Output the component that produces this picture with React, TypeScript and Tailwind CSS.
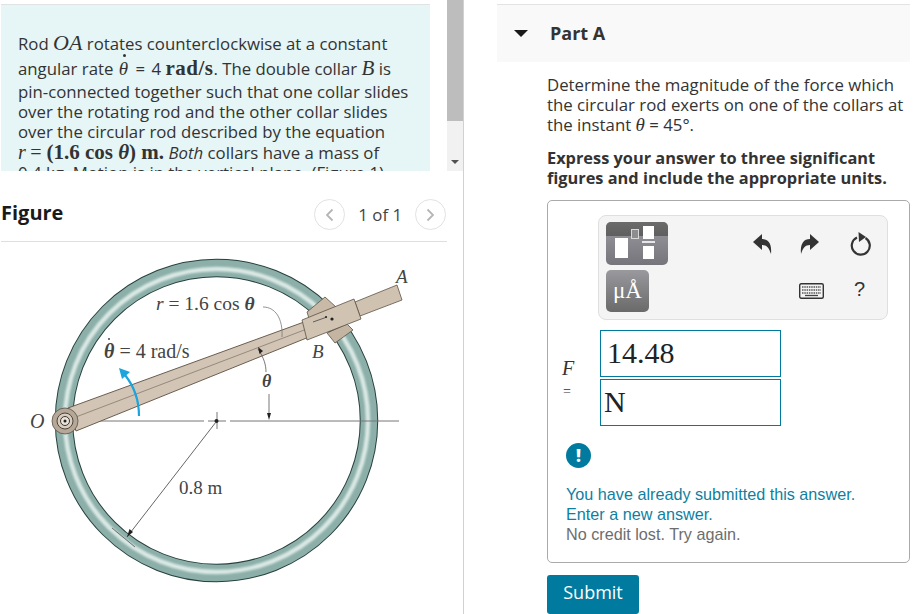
const serif = "font-['Liberation_Serif',serif]"

const ThetaDot = () => (
  <span className="relative mx-[1px] inline-block font-['Liberation_Serif',serif] text-[19px] leading-none">
    <i>θ</i>
    <span className="absolute left-[4px] top-[-5px] h-[3px] w-[3px] rounded-full bg-[#333]" />
  </span>
)

function RodFigure() {
  return (
    <svg width="447" height="372" viewBox="0 242 447 372" className="block">
      <defs>
        <filter id="soft" x="-10%" y="-10%" width="120%" height="120%">
          <feGaussianBlur stdDeviation="1.2" />
        </filter>
        <filter id="slight" x="-5%" y="-5%" width="110%" height="110%">
          <feGaussianBlur stdDeviation="0.35" />
        </filter>
      </defs>
      <g filter="url(#slight)">
        {/* ring */}
        <circle cx="216.5" cy="420.5" r="152.5" fill="none" stroke="#26403b" strokeWidth="18.5" />
        <circle cx="216.5" cy="420.5" r="152.5" fill="none" stroke="#8cafa9" strokeWidth="16.5" />
        <circle cx="216.5" cy="420.5" r="151.5" fill="none" stroke="#dbe9e5" strokeWidth="4.5" filter="url(#soft)" />

        {/* axis lines */}
        <path d="M72 421H204M230 421H399M217 412V429M208 421H226" stroke="#777" strokeWidth="1" fill="none" />
        <circle cx="216.5" cy="421" r="2" fill="#222" />
        <path d="M216 422L127 537" stroke="#666" strokeWidth="1" fill="none" />
        <path d="M127 537l2.5-8 3.5 3z" fill="#222" />
        <path d="M112 528L135 547" stroke="#555" strokeWidth="0.8" fill="none" />

        {/* collar B wedges */}
        <path d="M307 312L325 297L336 307L340 316L312 328z" fill="#c9baa8" stroke="#5b5146" strokeWidth="0.8" />
        <path d="M327 333L347 324L353 330L335 343z" fill="#c4b5a3" stroke="#5b5146" strokeWidth="0.8" />

        {/* rod */}
        <path d="M355 302L397 285L402 300L360 316z" fill="#cfc2b1" stroke="#5e5346" strokeWidth="0.8" />
        <path d="M68 408L304 322L309 337L76 431z" fill="#d2c5b6" stroke="#6b5d4e" strokeWidth="1" />
        <path d="M68 420L320 324" stroke="#7d7062" strokeWidth="0.7" fill="none" />

        {/* sliding collar */}
        <path d="M302 320L354 299L361 319L307 340z" fill="#d0c3b2" stroke="#5b5146" strokeWidth="0.8" />
        <path d="M313 322L327 317" stroke="#444" strokeWidth="0.8" fill="none" />
        <circle cx="326" cy="321" r="1" fill="#222" transform="translate(0 -4)" />
        <circle cx="332" cy="319" r="1.6" fill="#222" />

        {/* pin O */}
        <circle cx="65" cy="421" r="13" fill="#b5a898" stroke="#5b5146" strokeWidth="0.8" />
        <circle cx="65" cy="421" r="8" fill="#d8cdbf" stroke="#4c443a" strokeWidth="1" />
        <circle cx="65" cy="421" r="4.5" fill="#e9e3da" stroke="#3c352d" strokeWidth="1" />
        <circle cx="65" cy="421" r="1.5" fill="#222" />

        {/* leader for r and theta */}
        <path d="M263 307C275 307 283 318 282 337" stroke="#777" strokeWidth="0.8" fill="none" />
        <path d="M258 349C264 358 266 365 266 372" stroke="#555" strokeWidth="0.8" fill="none" />
        <path d="M269 394L269 417" stroke="#555" strokeWidth="0.8" fill="none" />
        <path d="M269 420l-2-7h4z" fill="#222" />
        <path d="M258 347l1.5 7 3.5-3z" fill="#222" />

        {/* blue rotation arrow */}
        <path d="M139 416C139 397 133 385 125 375" stroke="#1ca4dc" strokeWidth="2.2" fill="none" />
        <path d="M119 368L130 372L122 379z" fill="#1ca4dc" />
      </g>

      <g className="font-['Liberation_Serif',serif]" fill="#444">
        <text x="156" y="310" fontSize="19.5"><tspan fontStyle="italic">r</tspan> = 1.6 cos <tspan fontStyle="italic" fontWeight="700">θ</tspan></text>
        <text x="104" y="358" fontSize="20"><tspan fontStyle="italic" fontWeight="700">θ</tspan> = 4 rad/s</text>
        <circle cx="109" cy="339" r="1" />
        <text x="262" y="387" fontSize="18" fontStyle="italic" fontWeight="700">θ</text>
        <text x="179" y="494" fontSize="19">0.8 m</text>
        <text x="30" y="428" fontSize="20" fontStyle="italic">O</text>
        <text x="312" y="358" fontSize="19" fontStyle="italic">B</text>
        <text x="396" y="283" fontSize="19" fontStyle="italic">A</text>
      </g>
    </svg>
  )
}

function Toolbar() {
  return (
    <div className="ml-[50px] flex h-[105px] w-[290px] rounded-lg border border-[#dfdfdf] bg-[#f4f4f4] pl-[7px] pt-[6px]">
      <div className="flex w-[100px] flex-col gap-[5px]">
        <div className="relative h-[43px] w-[62px] overflow-hidden rounded-[5px] bg-gradient-to-b from-[#9c9aa1] to-[#76757b]">
          <div className="h-[14px] bg-gradient-to-b from-[#6b6b6b] to-[#5f5f5f]" />
          <span className="absolute left-[9px] top-[16px] h-[20px] w-[13px] bg-white" />
          <span className="absolute left-[25px] top-[7px] h-[10px] w-[8px] border border-[#d8d8d8] bg-[#8d8d90]" />
          <span className="absolute left-[37px] top-[4px] h-[13px] w-[11px] bg-white" />
          <span className="absolute left-[36px] top-[19px] h-[2px] w-[13px] bg-[#e6e6e6]" />
          <span className="absolute left-[37px] top-[24px] h-[13px] w-[11px] bg-white" />
        </div>
        <div className="flex h-[42px] w-[43px] items-end justify-center rounded-[5px] bg-gradient-to-b from-[#9a999e] to-[#6a6a6a] pb-[10px] font-['Liberation_Serif',serif] text-[23px] leading-[22px] text-white">
          μÅ
        </div>
      </div>
      <div className="ml-[47px] flex flex-col">
        <div className="flex h-[44px] items-center gap-[28px]">
          <svg width="19" height="21" viewBox="0 0 19 21">
            <path d="M0 8L9 0V5C15 5 19 9 18 20C16 14 14 11 9 11V16z" fill="#333" />
          </svg>
          <svg width="19" height="21" viewBox="0 0 19 21">
            <path d="M19 8L10 0V5C4 5 0 9 1 20C3 14 5 11 10 11V16z" fill="#333" />
          </svg>
          <svg width="22" height="24" viewBox="0 0 22 24" className="ml-[3px]">
            <path d="M7 5.5A9 9 0 1 0 15.5 6" fill="none" stroke="#333" strokeWidth="2.2" />
            <path d="M8.500 0L16 5L9 10z" fill="#333" />
          </svg>
        </div>
        <div className="flex h-[50px] items-center pl-[46px]">
          <svg width="25" height="16" viewBox="0 0 25 16">
            <rect x="0.700" y="0.700" width="23.600" height="14.600" rx="1.500" fill="#f4f4f4" stroke="#333" strokeWidth="1.400" />
            <path d="M3 4H22M3 7H22M3 10H22" stroke="#555" strokeWidth="1.600" strokeDasharray="1.500 0.800" />
            <path d="M6 12.500H19" stroke="#444" strokeWidth="1.300" />
          </svg>
          <span className="mb-[4px] ml-[30px] font-['Liberation_Sans',sans-serif] text-[20px] leading-none text-[#333]">?</span>
        </div>
      </div>
    </div>
  )
}

export default function App() {
  return (
    <div className="flex h-[614px] w-[918px] overflow-hidden bg-white font-['Open_Sans',sans-serif] text-[#333]">
      {/* left: problem statement and figure */}
      <div className="h-full w-[464px] shrink-0 border-r border-[#c6d3e0]">
        <div className="flex h-[171px]">
          <div className="w-[447px] pl-px pr-[17px] pt-[4px]">
            <div className="h-[167px] overflow-hidden border-t border-[#dfe3e3] bg-[#e6f5f6] pl-[17px] pr-[18px] pt-[27px] text-[16.8px] leading-[20px]">
              <p className="h-[20px]">
                Rod <i className={serif + ' text-[22px] leading-none'}>OA</i> rotates counterclockwise at a constant
              </p>
              <p className="mt-[6px] h-[20px]">
                angular rate <ThetaDot /> <span className="mx-[2px]">=</span> 4{' '}
                <span className={serif + ' text-[21px] font-bold leading-none tracking-[0.5px]'}>rad/s</span>. The double collar{' '}
                <i className={serif + ' text-[21px] leading-none'}>B</i> is
              </p>
              <p className="mt-[4px]">
                pin-connected together such that one collar slides over the rotating rod and the other collar slides over the circular
                rod described by the equation
              </p>
              <p className="h-[20px]">
                <i className={serif + ' text-[20px] leading-none'}>r</i> <span className={serif + ' text-[20px] leading-none'}>= </span>
                <span className={serif + ' text-[21px] font-bold leading-none'}>(1.6 cos <i>θ</i>) m.</span> <i>Both</i> collars have a mass of
              </p>
              <p className="mt-[1px]">0.4 kg. Motion is in the vertical plane. (Figure 1)</p>
            </div>
          </div>
          <div className="flex h-[171px] w-[16px] flex-col bg-[#f1f1f1]">
            <div className="h-[121px] bg-[#bdbdbd]" />
            <div className="mx-auto mt-[39px] h-0 w-0 border-x-[4px] border-t-[4px] border-x-transparent border-t-[#505050]" />
          </div>
        </div>

        <div className="ml-px flex h-[71px] w-[446px] items-center justify-between border-b border-[#dde0e3] pt-[14px]">
          <h2 className="text-[20px] font-bold text-[#1a1a1a]">Figure</h2>
          <div className="mr-[1px] mt-[3px] flex items-center gap-[13px] text-[16.8px] text-[#444]">
            <span className="flex h-[31px] w-[31px] items-center justify-center rounded-full border border-[#e2e2e2] text-[#aaa]">
              <svg width="9" height="14" viewBox="0 0 9 14"><path d="M7.500 1.500L2 7L7.500 12.500" fill="none" stroke="#b5b5b5" strokeWidth="1.800" /></svg>
            </span>
            <span>1 of 1</span>
            <span className="flex h-[31px] w-[31px] items-center justify-center rounded-full border border-[#e2e2e2]">
              <svg width="9" height="14" viewBox="0 0 9 14"><path d="M1.500 1.500L7 7L1.500 12.500" fill="none" stroke="#b5b5b5" strokeWidth="1.800" /></svg>
            </span>
          </div>
        </div>

        <RodFigure />
      </div>

      {/* right: part A */}
      <div className="flex-1 pl-[33px] pr-[8px] pt-[4px]">
        <div className="flex h-[58px] items-center border-t border-[#e3e3e3] bg-[#f9f9f9] pb-[1px]">
          <span className="ml-[17px] h-0 w-0 border-x-[7px] border-t-[7px] border-x-transparent border-t-[#1a1a1a]" />
          <h3 className="ml-[22px] text-[18px] font-bold text-[#333]">Part A</h3>
        </div>

        <div className="pl-[50px]">
          <p className="mt-[13px] text-[16.8px] leading-[20px]">
            Determine the magnitude of the force which the circular rod exerts on one of the collars at the instant{' '}
            <i className={serif + ' text-[19px]'}>θ</i> = 45°.
          </p>
          <p className="mt-[13px] text-[16.35px] font-bold leading-[20px]">
            Express your answer to three significant figures and include the appropriate units.
          </p>

          <div className="mt-[12px] h-[363px] w-[363px] rounded-[5px] border border-[#aaa] pt-[14px]">
            <Toolbar />
            <div className="mt-[10px] flex">
              <div className={serif + ' flex w-[52px] flex-col items-start pl-[14px] pt-[26px] text-[#333]'}>
                <i className="text-[20px] leading-[24px]">F</i>
                <span className="mt-[2px] pl-px text-[14px] leading-[20px]">=</span>
              </div>
              <div className={serif + ' flex flex-col gap-[2px] text-[30px] leading-[44px] text-[#222]'}>
                <div className="h-[47px] w-[181px] border border-[#007a9e] pl-[6px]">14.48</div>
                <div className="h-[47px] w-[181px] border border-[#007a9e] pl-[3px]">N</div>
              </div>
            </div>
            <div className="ml-[18px] mt-[17px] flex h-[25px] w-[25px] items-center justify-center rounded-full bg-[#007a9e] text-[17px] font-extrabold leading-none text-white">
              !
            </div>
            <div className="ml-[18px] mt-[16px] font-['Liberation_Sans',sans-serif] text-[16.2px] leading-[20px] text-[#0f7fa1]">
              <p>You have already submitted this answer.</p>
              <p>Enter a new answer.</p>
              <p className="text-[#6d6d6d]">No credit lost. Try again.</p>
            </div>
          </div>

          <button className="mt-[12px] h-[39px] w-[92px] rounded-[3px] bg-[#007a9e] pb-[4px] text-[18px] text-white">Submit</button>
        </div>
      </div>
    </div>
  )
}
